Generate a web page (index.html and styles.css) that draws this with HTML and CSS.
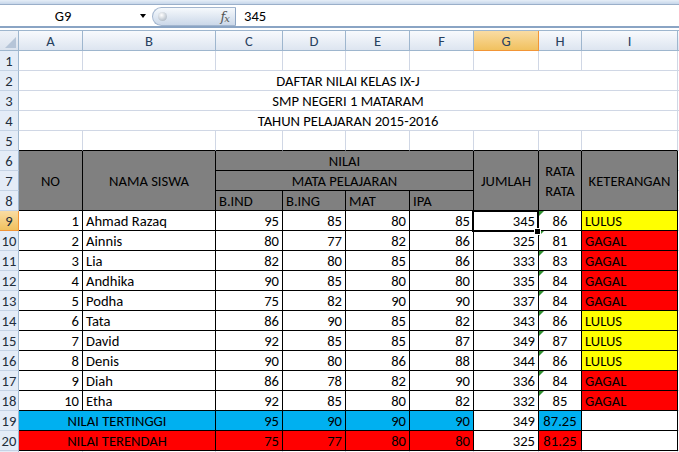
FILE: index.html
```html
<!DOCTYPE html>
<html>
<head>
<meta charset="utf-8">
<link rel="stylesheet" href="styles.css">
</head>
<body>
<div class="app">
  <div class="fbar">
    <div class="fbar-top"></div>
    <div class="fbar-main">
      <div class="namebox"><span class="ref">G9</span><span class="dd"></span></div>
      <div class="pill"><span class="knob"></span><span class="fx">f<span class="fxx">x</span></span></div>
      <div class="formula">345</div>
    </div>
  </div>
  <div class="sheet">
    <div class="corner"></div>
    <div class="ch">A</div><div class="ch">B</div><div class="ch">C</div><div class="ch">D</div><div class="ch">E</div><div class="ch">F</div><div class="ch on">G</div><div class="ch">H</div><div class="ch">I</div><div class="ch"></div>

    <div class="rh">1</div>
    <div class="c"></div><div class="c"></div><div class="c"></div><div class="c"></div><div class="c"></div><div class="c"></div><div class="c"></div><div class="c"></div><div class="c"></div><div class="c"></div>

    <div class="rh">2</div>
    <div class="c title">DAFTAR NILAI KELAS IX-J</div><div class="c"></div>
    <div class="rh">3</div>
    <div class="c title">SMP NEGERI 1 MATARAM</div><div class="c"></div>
    <div class="rh">4</div>
    <div class="c title">TAHUN PELAJARAN 2015-2016</div><div class="c"></div>

    <div class="rh">5</div>
    <div class="c kb"></div><div class="c kb"></div><div class="c kb"></div><div class="c kb"></div><div class="c kb"></div><div class="c kb"></div><div class="c kb"></div><div class="c kb"></div><div class="c kb"></div><div class="c"></div>

    <div class="rh">6</div>
    <div class="c k g m rs3">NO</div>
    <div class="c k g m rs3">NAMA SISWA</div>
    <div class="c k g m cs4">NILAI</div>
    <div class="c k g m rs3">JUMLAH</div>
    <div class="c k g m rs3 wrap">RATA RATA</div>
    <div class="c k g m rs3">KETERANGAN</div>
    <div class="c"></div>

    <div class="rh">7</div>
    <div class="c k g m cs4">MATA PELAJARAN</div>
    <div class="c"></div>

    <div class="rh">8</div>
    <div class="c k g">B.IND</div><div class="c k g">B.ING</div><div class="c k g">MAT</div><div class="c k g">IPA</div>
    <div class="c"></div>

    <div class="rh on">9</div>
    <div class="c k r">1</div><div class="c k">Ahmad Razaq</div><div class="c k r">95</div><div class="c k r">85</div><div class="c k r">80</div><div class="c k r">85</div><div class="c k r sel">345</div><div class="c k m tri">86</div><div class="c k y">LULUS</div><div class="c"></div>

    <div class="rh">10</div>
    <div class="c k r">2</div><div class="c k">Ainnis</div><div class="c k r">80</div><div class="c k r">77</div><div class="c k r">82</div><div class="c k r">86</div><div class="c k r">325</div><div class="c k m tri">81</div><div class="c k rd">GAGAL</div><div class="c"></div>

    <div class="rh">11</div>
    <div class="c k r">3</div><div class="c k">Lia</div><div class="c k r">82</div><div class="c k r">80</div><div class="c k r">85</div><div class="c k r">86</div><div class="c k r">333</div><div class="c k m tri">83</div><div class="c k rd">GAGAL</div><div class="c"></div>

    <div class="rh">12</div>
    <div class="c k r">4</div><div class="c k">Andhika</div><div class="c k r">90</div><div class="c k r">85</div><div class="c k r">80</div><div class="c k r">80</div><div class="c k r">335</div><div class="c k m tri">84</div><div class="c k rd">GAGAL</div><div class="c"></div>

    <div class="rh">13</div>
    <div class="c k r">5</div><div class="c k">Podha</div><div class="c k r">75</div><div class="c k r">82</div><div class="c k r">90</div><div class="c k r">90</div><div class="c k r">337</div><div class="c k m tri">84</div><div class="c k rd">GAGAL</div><div class="c"></div>

    <div class="rh">14</div>
    <div class="c k r">6</div><div class="c k">Tata</div><div class="c k r">86</div><div class="c k r">90</div><div class="c k r">85</div><div class="c k r">82</div><div class="c k r">343</div><div class="c k m tri">86</div><div class="c k y">LULUS</div><div class="c"></div>

    <div class="rh">15</div>
    <div class="c k r">7</div><div class="c k">David</div><div class="c k r">92</div><div class="c k r">85</div><div class="c k r">85</div><div class="c k r">87</div><div class="c k r">349</div><div class="c k m tri">87</div><div class="c k y">LULUS</div><div class="c"></div>

    <div class="rh">16</div>
    <div class="c k r">8</div><div class="c k">Denis</div><div class="c k r">90</div><div class="c k r">80</div><div class="c k r">86</div><div class="c k r">88</div><div class="c k r">344</div><div class="c k m tri">86</div><div class="c k y">LULUS</div><div class="c"></div>

    <div class="rh">17</div>
    <div class="c k r">9</div><div class="c k">Diah</div><div class="c k r">86</div><div class="c k r">78</div><div class="c k r">82</div><div class="c k r">90</div><div class="c k r">336</div><div class="c k m tri">84</div><div class="c k rd">GAGAL</div><div class="c"></div>

    <div class="rh">18</div>
    <div class="c k r">10</div><div class="c k">Etha</div><div class="c k r">92</div><div class="c k r">85</div><div class="c k r">80</div><div class="c k r">82</div><div class="c k r">332</div><div class="c k m tri">85</div><div class="c k rd">GAGAL</div><div class="c"></div>

    <div class="rh">19</div>
    <div class="c k m bl cs2">NILAI TERTINGGI</div><div class="c k r bl">95</div><div class="c k r bl">90</div><div class="c k r bl">90</div><div class="c k r bl">90</div><div class="c k r">349</div><div class="c k m bl">87.25</div><div class="c k"></div><div class="c"></div>

    <div class="rh">20</div>
    <div class="c k m rd cs2">NILAI TERENDAH</div><div class="c k r rd">75</div><div class="c k r rd">77</div><div class="c k r rd">80</div><div class="c k r rd">80</div><div class="c k r">325</div><div class="c k m rd">81.25</div><div class="c k"></div><div class="c"></div>

    <div class="rh"></div>
    <div class="c"></div><div class="c"></div><div class="c"></div><div class="c"></div><div class="c"></div><div class="c"></div><div class="c"></div><div class="c"></div><div class="c"></div><div class="c"></div>
  </div>
</div>
</body>
</html>
```
FILE: styles.css
```css
html, body {
  margin: 0;
  padding: 0;
  background: #fff;
}
.app {
  width: 679px;
  height: 452px;
  overflow: hidden;
  font-family: Carlito, Lato, "Liberation Sans", sans-serif;
  font-size: 14.6px;
  color: #000;
}

/* formula bar */
.fbar {
  height: 30px;
  background: #fff;
}
.fbar-top {
  height: 4px;
  background: linear-gradient(#e6eef7, #c6d6ea);
  border-bottom: 1px solid #9aafc9;
}
.fbar-main {
  display: flex;
  height: 21px;
  border-bottom: 2px solid #8aa4c4;
}
.namebox {
  width: 152px;
  display: flex;
  align-items: center;
  position: relative;
}
.ref {
  width: 126px;
  text-align: center;
}
.dd {
  margin-left: 14px;
  width: 0;
  height: 0;
  border-left: 3px solid transparent;
  border-right: 3px solid transparent;
  border-top: 4px solid #000;
}
.pill {
  width: 84px;
  margin-top: 2px;
  height: 19px;
  box-sizing: border-box;
  border: 1px solid #a3b6cf;
  border-right: 1px solid #8ea6c4;
  border-radius: 10px 0 0 10px;
  background: linear-gradient(#f6f9fc, #cbd8e9);
  display: flex;
  align-items: center;
  position: relative;
}
.knob {
  width: 9px;
  height: 9px;
  border-radius: 50%;
  margin-left: 5px;
  background: radial-gradient(circle at 40% 35%, #ffffff, #b9c2cc 70%, #9aa5b1);
}
.fx {
  margin-left: auto;
  margin-right: 6px;
  font-family: "DejaVu Serif", "Liberation Serif", serif;
  font-style: italic;
  font-size: 13px;
  color: #555;
  letter-spacing: -1px;
}
.fxx {
  font-size: 10px;
  position: relative;
  top: 1px;
}
.formula {
  flex: 1;
  padding-left: 8px;
  display: flex;
  align-items: center;
}

/* sheet grid */
.sheet {
  display: grid;
  grid-template-columns: 19px 64px 133px 67px 63px 64px 64px 65px 43px 96px 1px;
  grid-template-rows: 20px repeat(21, 20px);
  border-top: 1px solid #9eb6ce;
}
.c, .rh, .ch, .corner {
  box-sizing: border-box;
  border-right: 1px solid #d0d7e5;
  border-bottom: 1px solid #d0d7e5;
  white-space: nowrap;
  overflow: hidden;
  display: flex;
  align-items: center;
  padding: 1px 3px 0 3px;
  line-height: 18px;
}
.corner {
  position: relative;
  background: linear-gradient(#eef2f8, #dbe3ee);
  border-right: 1px solid #9eb6ce;
  border-bottom: 1px solid #9eb6ce;
}
.corner::after {
  content: "";
  position: absolute;
  right: 2px;
  bottom: 2px;
  width: 0;
  height: 0;
  border-style: solid;
  border-width: 0 0 11px 11px;
  border-color: transparent transparent #b6c5d8 transparent;
}
.ch {
  justify-content: center;
  background: linear-gradient(#f8fafd, #dde5f0);
  border-right: 1px solid #9eb6ce;
  border-bottom: 1px solid #9eb6ce;
  color: #27415f;
}
.ch.on, .rh.on {
  background: linear-gradient(#f9dca3, #f1c15f);
  border-right-color: #f29536;
  border-bottom-color: #f29536;
}
.rh {
  justify-content: center;
  padding: 1px 0 0 0;
  background: #e4ecf7;
  border-right: 1px solid #9eb6ce;
  border-bottom: 1px solid #c5d3e5;
  color: #222e3c;
}

.title {
  grid-column: span 9;
  justify-content: center;
}
.kb {
  border-bottom-color: #000;
}
.k {
  border-right-color: #000;
  border-bottom-color: #000;
}
.g {
  background: #808080;
}
.m {
  justify-content: center;
}
.r {
  justify-content: flex-end;
}
.rs3 {
  grid-row: span 3;
}
.cs4 {
  grid-column: span 4;
}
.cs2 {
  grid-column: span 2;
}
.wrap {
  white-space: normal;
  text-align: center;
  line-height: 20px;
  width: 1px;
  min-width: 100%;
  padding-left: 4px;
  padding-right: 4px;
}
.y {
  background: #ffff00;
}
.rd {
  background: #ff0000;
}
.bl {
  background: #00b0f0;
}

.sel {
  position: relative;
  overflow: visible;
  z-index: 2;
}
.sel::after {
  content: "";
  position: absolute;
  left: -2px;
  top: -1px;
  right: -1px;
  bottom: -2px;
  border: 2px solid #000;
  box-shadow: inset 0 0 0 1px #fff;
}
.sel::before {
  content: "";
  position: absolute;
  left: 60px;
  top: 17px;
  width: 7px;
  height: 7px;
  box-sizing: border-box;
  background: #000;
  border: 1px solid #fff;
  z-index: 3;
}
.tri {
  position: relative;
}
.tri::before {
  content: "";
  position: absolute;
  left: 0;
  top: 0;
  width: 0;
  height: 0;
  border-style: solid;
  border-width: 5px 5px 0 0;
  border-color: #2e8f2e transparent transparent transparent;
}
```
